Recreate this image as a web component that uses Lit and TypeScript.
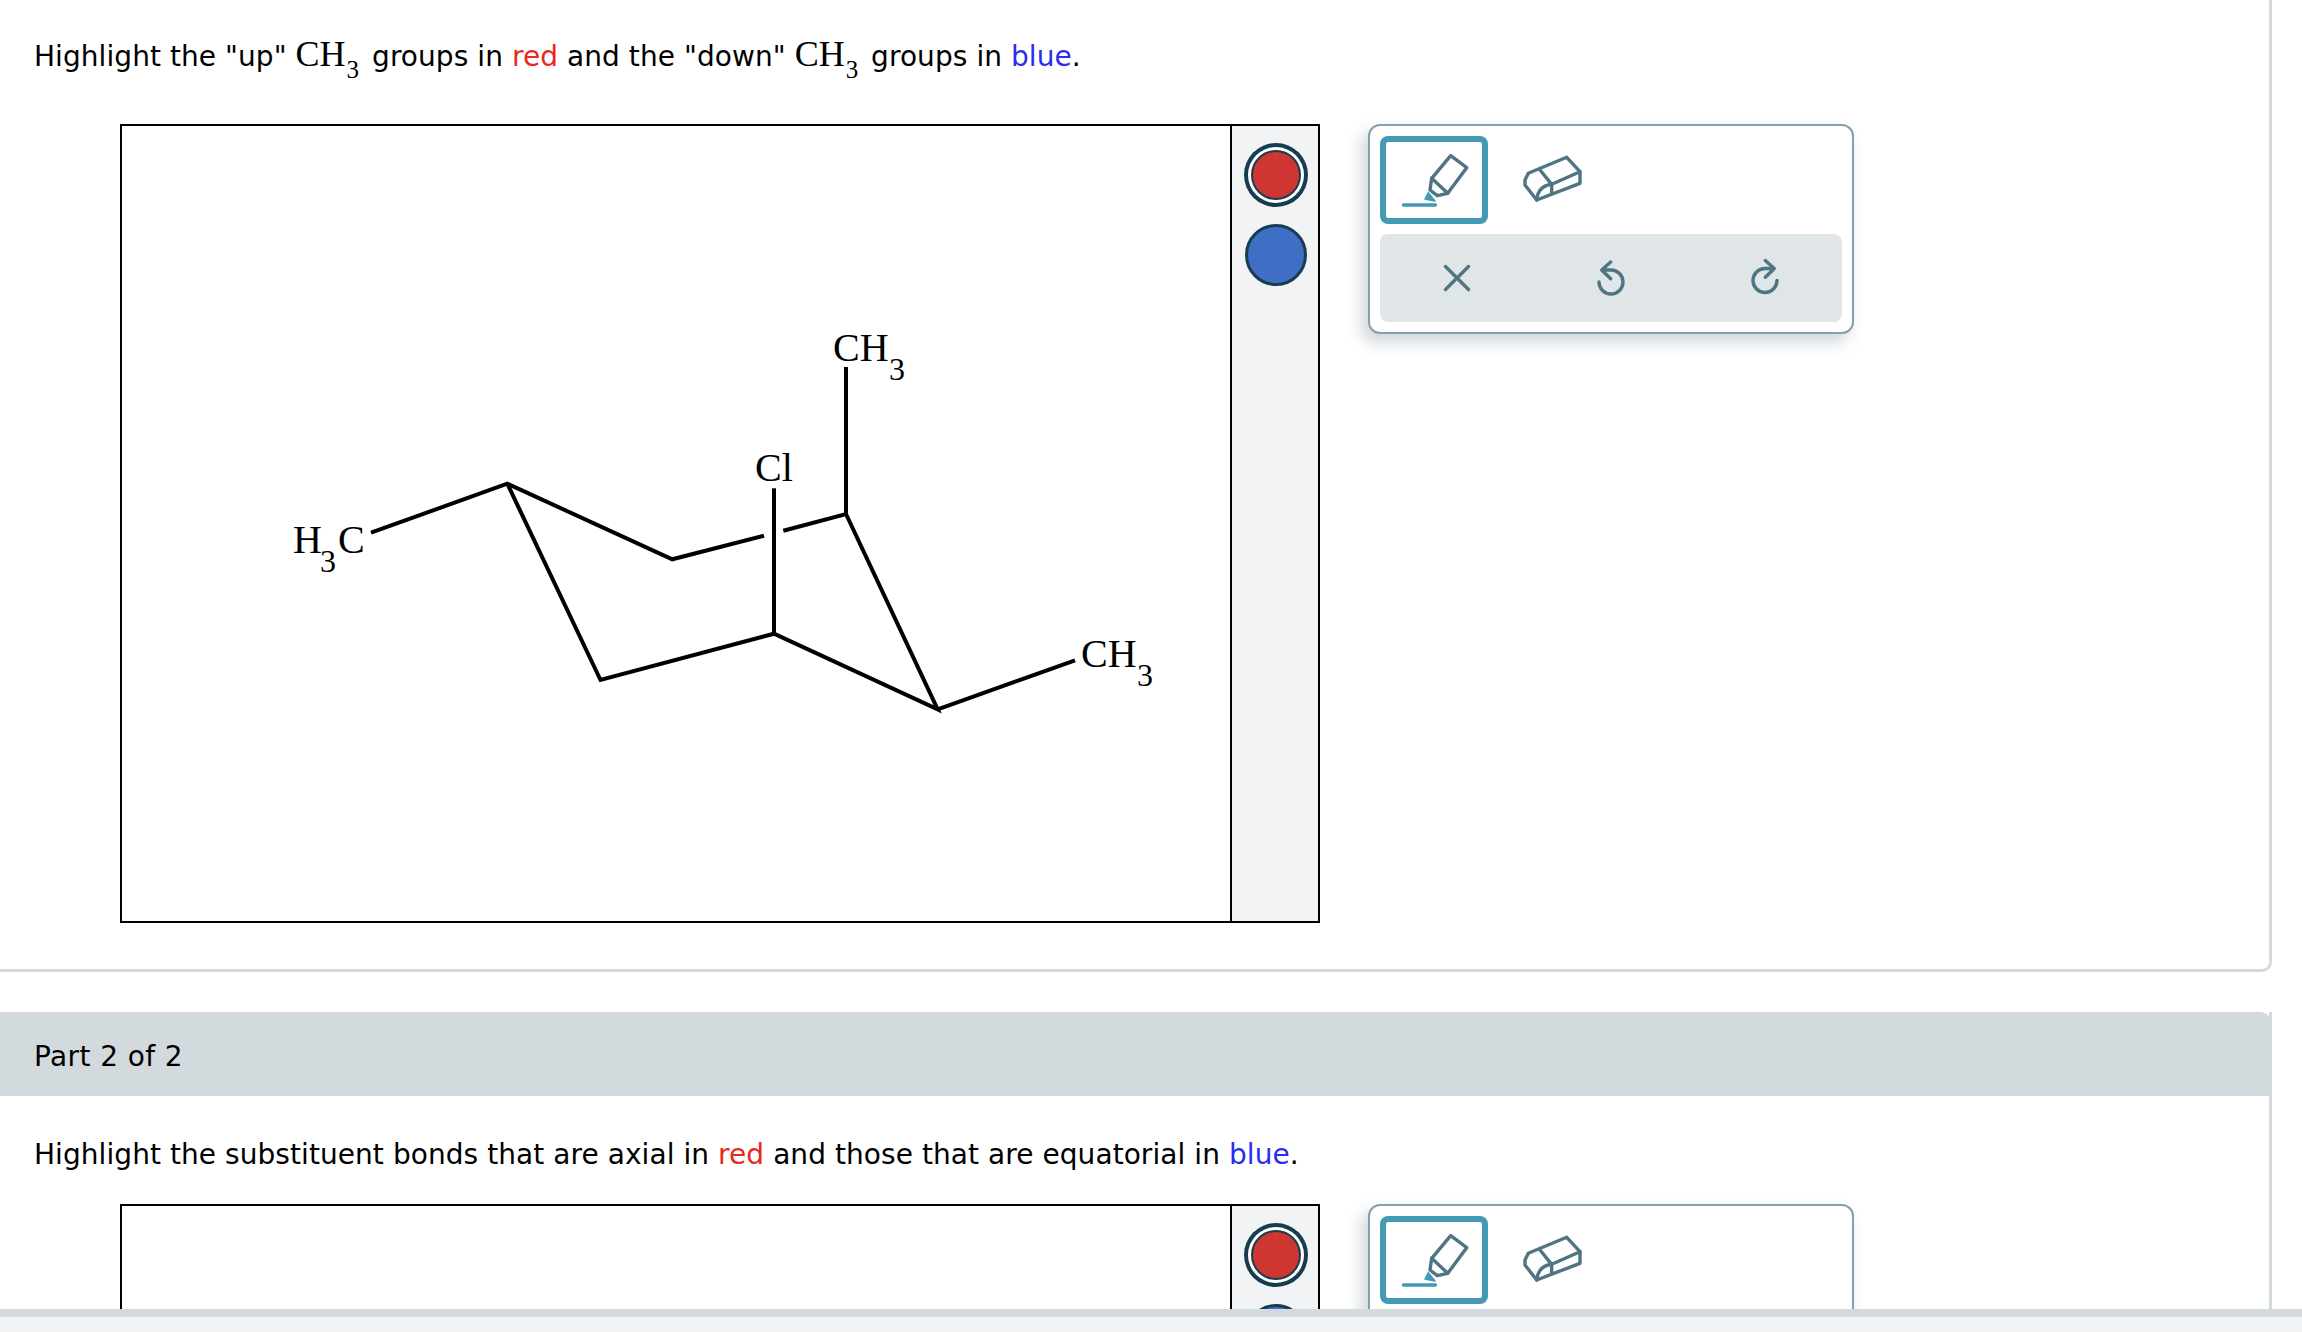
import { LitElement, html, css, svg } from "lit";
import { customElement } from "lit/decorators.js";

const molecule = svg`
  <g fill="none" stroke="#000" stroke-width="4" stroke-linejoin="miter">
    <path d="M371 532.7 L507.3 483.7 L672.3 559.3 L764 535.7" />
    <path d="M783.3 530.7 L846 514 L937.7 709.3 L774 633.7 L600.5 680 L507.3 483.7" />
    <path d="M846 367 V514" />
    <path d="M774 488.3 V633.7" />
    <path d="M937.7 709.3 L1075 660.3" />
  </g>
  <g font-family="'Liberation Serif', serif" font-size="40" fill="#000">
    <text x="293" y="553">H</text>
    <text x="320" y="572" font-size="32">3</text>
    <text x="338" y="553">C</text>
    <text x="755" y="481">Cl</text>
    <text x="1081" y="667">CH</text>
    <text x="1137" y="686" font-size="32">3</text>
    <text x="833" y="361">CH</text>
    <text x="889" y="380" font-size="32">3</text>
  </g>
`;

@customElement("drawing-tool")
class DrawingTool extends LitElement {
  static styles = css`
    :host { display: flex; align-items: flex-start; margin-left: 120px; }
    .canvas {
      box-sizing: border-box; width: 1200px; height: 799px; flex: none;
      border: 2px solid #000; display: flex; background: #fff;
    }
    .stage { flex: 1; position: relative; overflow: hidden; }
    .stage svg { position: absolute; left: 0; top: 0; }
    .colors {
      box-sizing: border-box; width: 88px; border-left: 2px solid #000; background: #f1f3f5;
      display: flex; flex-direction: column; align-items: center; padding: 17px 0 0 2px; gap: 17px;
    }
    .dot { box-sizing: border-box; width: 64px; height: 64px; border-radius: 50%; }
    .dot.red { background: #cf3531; border: 2px solid #163c50; outline: none;
      box-shadow: 0 0 0 3px #fff, 0 0 0 7px #163c50; width: 50px; height: 50px; margin: 7px; }
    .dot.blue { background: #3f6fc4; border: 3px solid #163c50; width: 62px; height: 62px; }
    .panel {
      box-sizing: border-box; width: 486px; height: 210px; margin-left: 48px; flex: none;
      border: 2px solid #86a0ab; border-radius: 12px; background: #fff; padding: 10px;
      box-shadow: -6px 8px 16px rgba(60, 90, 105, 0.26);
    }
    .tools { display: flex; gap: 8px; }
    .tool { box-sizing: border-box; width: 108px; height: 88px; border-radius: 6px; }
    .tool svg { display: block; }
    .tool.on { border: 6px solid #4499b4; border-radius: 8px; }
    .bar {
      margin-top: 10px; height: 88px; background: #e0e6e8; border-radius: 8px;
      display: grid; grid-template-columns: repeat(3, 1fr); align-items: center; justify-items: center;
    }
    .bar svg { display: block; }
    .icon { fill: none; stroke: #4f7482; stroke-width: 3.4; stroke-linecap: round; stroke-linejoin: round; }
  `;
  static properties = { drawing: { type: Boolean } };
  drawing = false;

  render() {
    return html`
      <div class="canvas">
        <div class="stage">
          ${this.drawing ? html`<svg width="1110" height="795" viewBox="122 126 1110 795">${molecule}</svg>` : ""}
        </div>
        <div class="colors">
          <div class="dot red"></div>
          <div class="dot blue"></div>
        </div>
      </div>
      <div class="panel">
        <div class="tools">
          <div class="tool on">
            <svg width="96" height="76" viewBox="6 6 96 76">
              <g class="icon">
                <path d="M70.7 19.7 L86.7 31.7 L67.7 57.3 L51.7 42.3 Z" />
                <path d="M51.7 42.3 L50 54 L57.3 59.7 L67.7 57.3" />
              </g>
              <path d="M48.3 56.7 L45 63 L55 65 Z" fill="#4499b4" stroke="#4499b4" stroke-width="1.5" stroke-linejoin="round" />
              <path d="M23.5 69 H55.5" stroke="#4499b4" stroke-width="3.4" stroke-linecap="round" />
            </svg>
          </div>
          <div class="tool">
            <svg width="108" height="88" viewBox="0 0 108 88">
              <g class="icon">
                <path d="M29 44 L32.3 37.3 L70.7 21.3 L84 35.7 V47.3 L40.7 64 L29 49 Z" />
                <path d="M44 34 L55.7 48.3 L84 35.7 M55.7 48.3 V57.3 M40.7 64 Q42 50 55.7 48.3" />
              </g>
            </svg>
          </div>
        </div>
        <div class="bar">
          <svg width="40" height="40" viewBox="-20 -20 40 40">
            <path class="icon" d="M-11.5 -11.5 L11.5 11.5 M11.5 -11.5 L-11.5 11.5" />
          </svg>
          <svg width="40" height="40" viewBox="-20 -20 40 40">
            <path class="icon" d="M-12 4 A12 12 0 1 0 0 -8 H-9 M-0.3 -16 L-9.3 -8 L-0.3 0.7" />
          </svg>
          <svg width="40" height="40" viewBox="-20 -20 40 40">
            <path class="icon" transform="scale(-1 1)" d="M-12 2.5 A12 12 0 1 0 0 -9.5 H-9 M-0.3 -17.5 L-9.3 -9.5 L-0.3 -0.8" />
          </svg>
        </div>
      </div>
    `;
  }
}

@customElement("app-root")
class AppRoot extends LitElement {
  static styles = css`
    :host {
      display: flex; flex-direction: column; height: 1332px; overflow: hidden; background: #f1f3f5;
      font-family: "DejaVu Sans", sans-serif; font-size: 28px; color: #000;
    }
    .scroll { height: 1309px; flex: none; overflow: hidden; background: #fff; }
    .edge { height: 8px; flex: none; background: #d3dadd; }
    .card {
      box-sizing: border-box; width: 2272px; height: 972px;
      border-right: 3px solid #d3dadd; border-bottom: 3px solid #d3dadd;
      border-bottom-right-radius: 10px; padding-top: 36px;
    }
    .prompt { margin: 0 0 0 34px; height: 88px; line-height: 36px; letter-spacing: 0.065px; }
    .math { font-family: "Liberation Serif", serif; font-size: 36px; line-height: 36px; margin: 0 4px 0 0; letter-spacing: 0; }
    .math sub { font-size: 25px; line-height: 0; vertical-align: -12px; margin-left: 1px; }
    .red { color: #e8291c; }
    .blue { color: #2c2cf0; }
    .part {
      box-sizing: border-box; width: 2272px; margin-top: 40px; border-right: 3px solid #d3dadd;
    }
    .head {
      box-sizing: border-box; height: 84px; margin-right: -3px; background: #d3dadd; border-top-right-radius: 12px;
      display: flex; align-items: center; padding: 5px 0 0 34px; letter-spacing: 0.4px;
    }
    .part .prompt { padding-top: 41px; height: 67px; line-height: 36px; }
  `;

  render() {
    return html`
      <div class="scroll">
        <section class="card">
          <p class="prompt">
            Highlight the "up" <span class="math">CH<sub>3</sub></span> groups in <span class="red">red</span>
            and the "down" <span class="math">CH<sub>3</sub></span> groups in <span class="blue">blue</span>.
          </p>
          <drawing-tool .drawing=${true}></drawing-tool>
        </section>
        <section class="part">
          <div class="head">Part 2 of 2</div>
          <p class="prompt">
            Highlight the substituent bonds that are axial in <span class="red">red</span>
            and those that are equatorial in <span class="blue">blue</span>.
          </p>
          <drawing-tool></drawing-tool>
        </section>
      </div>
      <div class="edge"></div>
    `;
  }
}
